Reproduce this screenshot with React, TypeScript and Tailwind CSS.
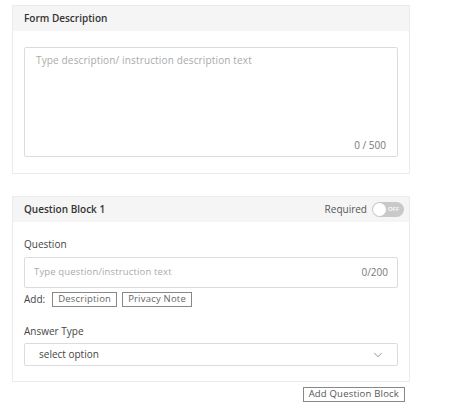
import React from "react";
import { ChevronDown } from "lucide-react";

const Card: React.FC<{ title: string; right?: React.ReactNode; children: React.ReactNode }> = ({
  title,
  right,
  children,
}) => (
  <div className="w-[398px] border border-[#ebebeb] bg-white">
    <div className="flex h-[25px] items-center justify-between bg-[#f5f5f5] pl-[11px] pr-[5px]">
      <span className="text-[10px] font-semibold text-[#333]">{title}</span>
      {right}
    </div>
    {children}
  </div>
);

const Toggle = () => (
  <div className="relative flex h-[15px] w-[32px] items-center rounded-full bg-[#c9c9c9]">
    <div className="absolute left-[1px] top-[1px] h-[13px] w-[13px] rounded-full bg-white" />
    <span className="ml-[16px] text-[6px] font-semibold text-white">OFF</span>
  </div>
);

const Chip: React.FC<{ children: React.ReactNode }> = ({ children }) => (
  <span className="flex h-[15px] items-center border border-[#888] px-[5px] text-[9.5px] tracking-[0.2px] text-[#666]">
    {children}
  </span>
);

export default function App() {
  return (
    <div className="min-h-[407px] w-[474px] bg-white pl-[12px] pt-[5px] font-['Open_Sans',sans-serif]">
      <Card title="Form Description">
        <div className="px-[11px] pb-[16px] pt-[16px]">
          <div className="flex h-[110px] flex-col justify-between rounded-[2px] border border-[#dcdcdc] px-[11px] pb-[3px] pt-[5px]">
            <span className="text-[10px] tracking-[0.15px] text-[#aaa]">Type description/ instruction description text</span>
            <span className="self-end text-[10px] text-[#777]">0 / 500</span>
          </div>
        </div>
      </Card>

      <div className="mt-[22px]">
        <Card
          title="Question Block 1"
          right={
            <div className="flex items-center gap-[5px]">
              <span className="text-[10px] text-[#555]">Required</span>
              <Toggle />
            </div>
          }
        >
          <div className="px-[11px] pb-[15px] pt-[15px]">
            <div className="h-[14px] text-[10px] leading-[14px] text-[#444]">Question</div>
            <div className="mt-[6px] flex h-[31px] items-center justify-between rounded-[2px] border border-[#dcdcdc] px-[9px]">
              <span className="text-[9.5px] tracking-[0.15px] text-[#aaa]">Type question/instruction text</span>
              <span className="text-[10px] text-[#777]">0/200</span>
            </div>
            <div className="mt-[4px] flex items-center gap-[5px]">
              <span className="mr-[2px] text-[10px] text-[#444]">Add:</span>
              <Chip>Description</Chip>
              <Chip>Privacy Note</Chip>
            </div>
            <div className="mt-[17px] h-[14px] text-[10px] leading-[14px] text-[#444]">Answer Type</div>
            <div className="mt-[5px] flex h-[23px] items-center justify-between rounded-[2px] border border-[#dcdcdc] pl-[14px] pr-[12px]">
              <span className="text-[10px] text-[#444]">select option</span>
              <ChevronDown size={14} strokeWidth={1.5} className="text-[#888]" />
            </div>
          </div>
        </Card>
      </div>

      <div className="flex w-[393px] justify-end pt-[5px]">
        <span className="flex h-[15px] items-center border border-[#888] px-[5px] text-[9.5px] tracking-[0.2px] text-[#555]">
          Add Question Block
        </span>
      </div>
    </div>
  );
}
